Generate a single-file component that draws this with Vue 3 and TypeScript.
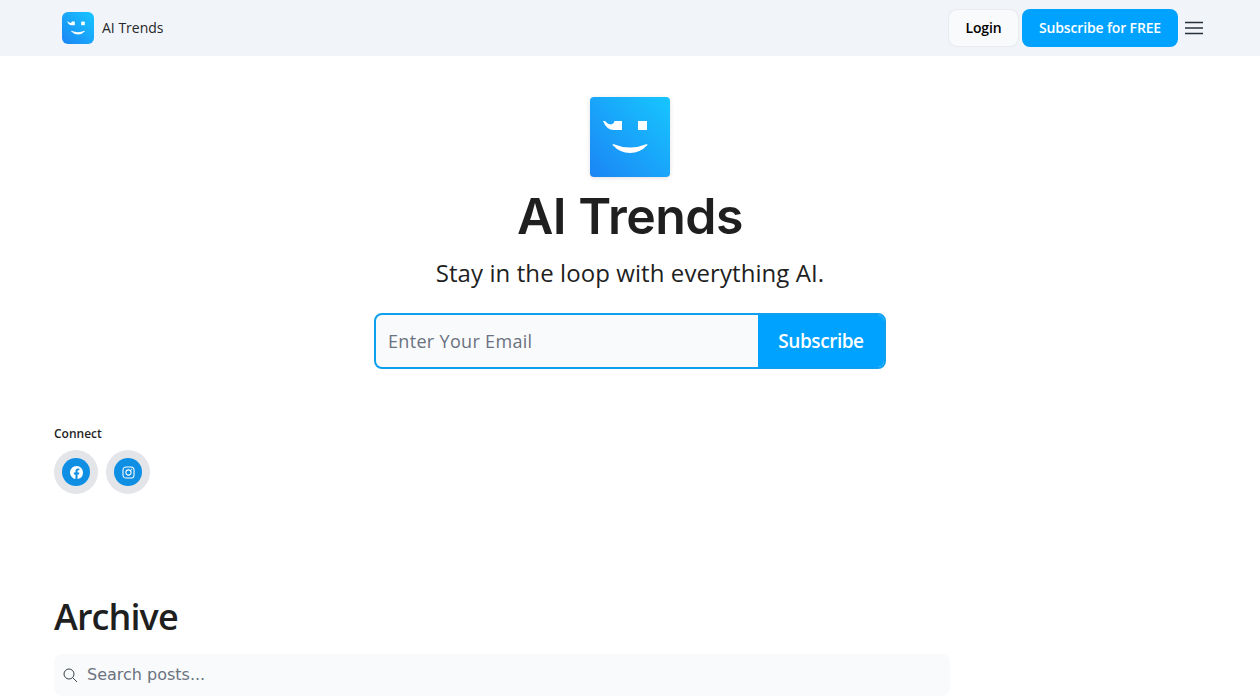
<script setup lang="ts">
// landing page of the AI Trends newsletter
const socials = ['facebook', 'instagram'] as const
</script>

<template>
  <div class="page">
    <header class="topbar">
      <a class="brand">
        <svg class="logo-small" viewBox="0 0 80 80">
          <defs>
            <linearGradient id="lgSmall" x1="1" y1="0" x2="0" y2="1">
              <stop offset="0" stop-color="#17c6ff" />
              <stop offset="1" stop-color="#1b85f5" />
            </linearGradient>
          </defs>
          <rect width="80" height="80" rx="15" fill="url(#lgSmall)" />
          <path d="M13 24 H15 Q18 27.500 21.500 27.500 Q24 27 24.500 24 H32 V33 H24 Q16.500 33 13 24Z" fill="#fff" />
          <rect x="48" y="24" width="9" height="9" fill="#fff" />
          <path d="M23 47 Q40 54 57 47 L57.500 48 Q50 56 40 56 Q30 56 22.500 48Z" fill="#fff" />
        </svg>
        <span class="brand-name">AI Trends</span>
      </a>
      <div class="actions">
        <button class="btn-login">Login</button>
        <button class="btn-free">Subscribe for FREE</button>
        <svg class="menu" viewBox="0 0 20 16" width="20" height="16">
          <path d="M1 2.500h18M1 8h18M1 13.500h18" stroke="#27303b" stroke-width="1.700" fill="none" />
        </svg>
      </div>
    </header>

    <section class="hero">
      <svg class="logo-big" viewBox="0 0 80 80">
        <defs>
          <linearGradient id="lgBig" x1="1" y1="0" x2="0" y2="1">
            <stop offset="0" stop-color="#17c6ff" />
            <stop offset="1" stop-color="#1b85f5" />
          </linearGradient>
        </defs>
        <rect width="80" height="80" rx="4" fill="url(#lgBig)" />
        <path d="M13 24 H15 Q18 27.500 21.500 27.500 Q24 27 24.500 24 H32 V33 H24 Q16.500 33 13 24Z" fill="#fff" />
        <rect x="48" y="24" width="9" height="9" fill="#fff" />
        <path d="M23 47 Q40 54 57 47 L57.500 48 Q50 56 40 56 Q30 56 22.500 48Z" fill="#fff" />
      </svg>
      <h1 class="title">AI Trends</h1>
      <p class="tagline">Stay in the loop with everything AI.</p>
      <form class="signup" @submit.prevent>
        <input class="signup-input" type="email" placeholder="Enter Your Email" />
        <button class="signup-btn">Subscribe</button>
      </form>
    </section>

    <section class="connect">
      <div class="connect-label">Connect</div>
      <div class="social-row">
        <a v-for="s in socials" :key="s" class="social">
          <span class="social-inner">
            <svg v-if="s === 'facebook'" viewBox="0 0 16 16" width="13" height="13">
              <path
                fill="#fff"
                d="M16 8a8 8 0 1 0-9.250 7.900v-5.590H4.720V8h2.030V6.240c0-2 1.190-3.110 3.020-3.110.870 0 1.790.160 1.790.160v1.970h-1.010c-.990 0-1.300.620-1.300 1.250V8h2.220l-.360 2.310H9.250v5.590A8 8 0 0 0 16 8z"
              />
            </svg>
            <svg v-else viewBox="0 0 16 16" width="13" height="13" fill="none" stroke="#fff" stroke-width="1.300">
              <rect x="1.200" y="1.200" width="13.600" height="13.600" rx="3.800" />
              <circle cx="8" cy="8" r="3.200" />
              <circle cx="12" cy="4" r="0.500" fill="#fff" stroke-width="0.600" />
            </svg>
          </span>
        </a>
      </div>
    </section>

    <section class="archive">
      <h2 class="archive-title">Archive</h2>
      <label class="search">
        <svg viewBox="0 0 16 16" width="16" height="16" fill="none" stroke="#3a424d" stroke-width="1">
          <circle cx="7" cy="7" r="5" />
          <path d="M10.700 10.700 15 15" />
        </svg>
        <input class="search-input" type="text" placeholder="Search posts..." />
      </label>
    </section>
  </div>
</template>

<style>
html,
body {
  margin: 0;
  background: #fff;
  overflow: hidden;
}
</style>

<style scoped>
.page {
  font-family: "Open Sans", "Liberation Sans", sans-serif;
  color: #1f1f1f;
}
.topbar {
  height: 56px;
  box-sizing: border-box;
  background: #f1f4f9;
  padding: 0 56px 0 62px;
  display: flex;
  align-items: center;
  justify-content: space-between;
}
.brand {
  display: flex;
  align-items: center;
  gap: 8px;
}
.logo-small {
  width: 32px;
  height: 32px;
  display: block;
}
.brand-name {
  font-size: 14px;
  line-height: 18px;
  color: #27272a;
}
.actions {
  display: flex;
  align-items: center;
  gap: 4px;
}
.btn-login,
.btn-free {
  font-family: inherit;
  font-size: 14px;
  font-weight: 600;
  border: none;
  border-radius: 8px;
  height: 38px;
  padding: 0 0 2px;
  letter-spacing: -0.15px;
}
.btn-login {
  width: 69px;
  height: 36px;
  background: #f9fafb;
  color: #000;
  box-shadow: 0 0 2px rgba(0, 0, 0, 0.14);
}
.btn-free {
  width: 156px;
  background: #00a2ff;
  color: #fff;
}
.menu {
  margin-left: 2px;
}
.hero {
  display: flex;
  flex-direction: column;
  align-items: center;
  padding-top: 41px;
}
.logo-big {
  width: 80px;
  height: 80px;
  display: block;
  filter: drop-shadow(0 1px 2px rgba(0, 0, 0, 0.12));
}
.title {
  margin: 7px 0 0;
  font-family: Inter, "Liberation Sans", sans-serif;
  font-size: 50px;
  line-height: 64px;
  font-weight: 600;
  letter-spacing: -0.5px;
  color: #1f1f1f;
}
.tagline {
  margin: 9px 0 0;
  font-size: 24px;
  line-height: 32px;
  letter-spacing: 0.08px;
  color: #1f1f1f;
}
.signup {
  margin-top: 24px;
  width: 512px;
  height: 56px;
  box-sizing: border-box;
  border: 2px solid #0ea0ee;
  border-radius: 8px;
  display: flex;
  overflow: hidden;
  background: #f9fafb;
}
.signup-input {
  flex: 1;
  min-width: 0;
  border: none;
  outline: none;
  background: transparent;
  padding: 0 12px;
  font-family: inherit;
  font-size: 18px;
  letter-spacing: 0.32px;
  color: #1f1f1f;
}
.signup-input::placeholder {
  color: #6b7280;
  opacity: 1;
}
.signup-btn {
  width: 126px;
  border: none;
  background: #00a2ff;
  color: #fff;
  font-family: inherit;
  font-size: 19px;
  font-weight: 600;
  letter-spacing: -0.45px;
}
.connect {
  margin-top: 56px;
  padding-left: 54px;
}
.connect-label {
  font-size: 12px;
  line-height: 18px;
  font-weight: 600;
  color: #1f1f1f;
}
.social-row {
  margin-top: 7px;
  display: flex;
  gap: 8px;
}
.social {
  width: 44px;
  height: 44px;
  border-radius: 50%;
  background: #e3e5e8;
  display: flex;
  align-items: center;
  justify-content: center;
}
.social-inner {
  width: 28px;
  height: 28px;
  border-radius: 50%;
  background: #0e8fe3;
  display: flex;
  align-items: center;
  justify-content: center;
}
.archive {
  margin-top: 100px;
  padding-left: 54px;
}
.archive-title {
  margin: 0;
  font-size: 36px;
  line-height: 46px;
  font-weight: 600;
  letter-spacing: -0.9px;
  color: #1f1f1f;
}
.search {
  margin-top: 14px;
  width: 896px;
  height: 42px;
  border-radius: 8px;
  background: #f9fafb;
  display: flex;
  align-items: center;
  gap: 7px;
  padding-left: 8px;
  box-sizing: border-box;
}
.search-input {
  flex: 1;
  border: none;
  outline: none;
  background: transparent;
  margin-top: -2px;
  font-family: "DejaVu Sans", sans-serif;
  font-size: 16px;
  color: #1f1f1f;
}
.search-input::placeholder {
  color: #6b7280;
  opacity: 1;
}
</style>
